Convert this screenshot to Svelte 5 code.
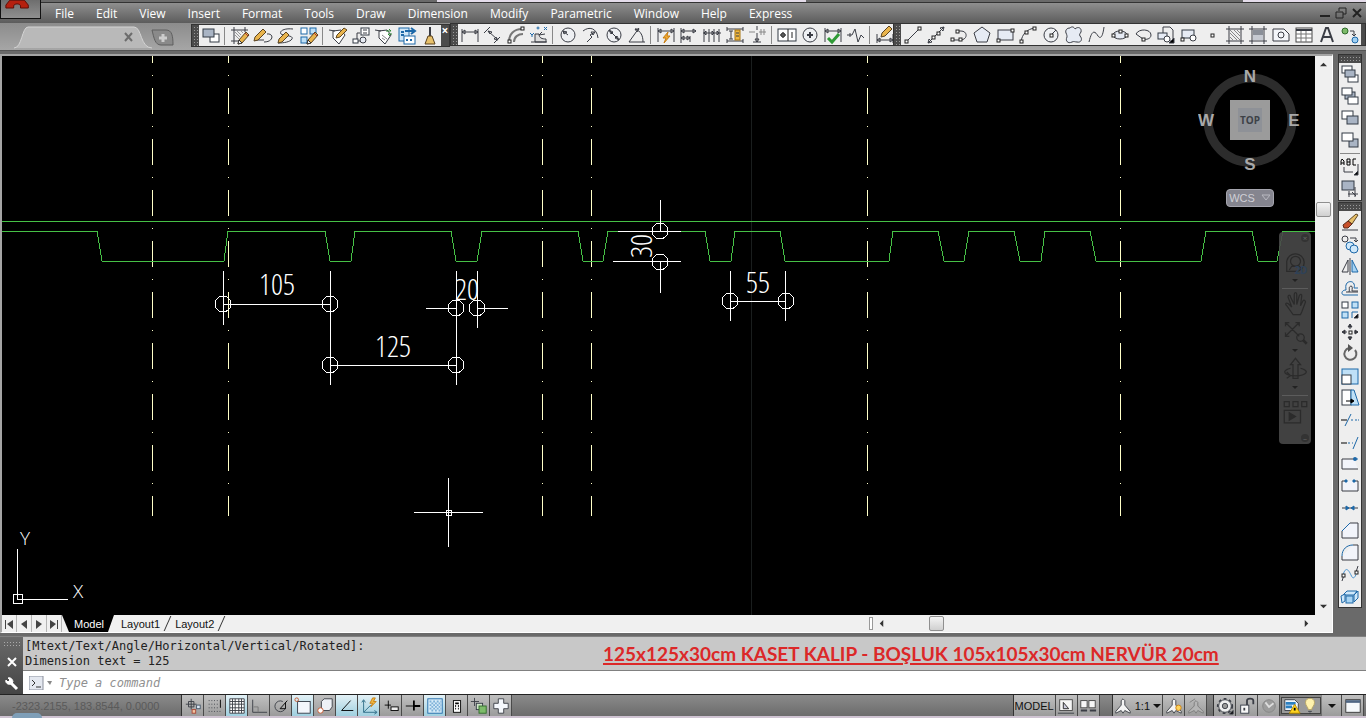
<!-- App.svelte -->
<script lang="ts">
    type Tool = { icon: string; label: string; on?: boolean };

    const menus = ['File', 'Edit', 'View', 'Insert', 'Format', 'Tools', 'Draw', 'Dimension', 'Modify', 'Parametric', 'Window', 'Help', 'Express'];

    // Shared pieces of the icon drawings
    const pencil = '<path d="M8 18l1-4 7-8 3 3-7 8z" fill="#e9b44c" stroke="#5a4320"/><path d="M8 18l1-4 3 3z" fill="#fff" stroke="#333"/><path d="M15 7l3 3" stroke="#a33"/>';
    const dimFrame = '<path d="M2 3v14M18 3v14M2 6h16M2 6l3-2v4zM18 6l-3-2v4z"/>';
    const node = (x: number, y: number) => `<rect x="${x - 1}" y="${y - 1}" width="3" height="3" fill="#fff" stroke="#222"/>`;
    const sq = (x: number, y: number, w: number, h: number, fill: string, stroke = '#333a45') =>
        `<rect x="${x}" y="${y}" width="${w}" height="${h}" fill="${fill}" stroke="${stroke}"/>`;

    // All icons are drawn on a 20 x 20 box
    const icons: Record<string, string> = {
        order: sq(9, 8, 9, 8, '#fff') + sq(2, 3, 11, 8, '#a9b4c4'),
        hatchEdit: '<path d="M1 4h17M4 1v17M1 15h8M15 1v5"/><path d="M5 9l5 5M5 6l5 5M7 5l4 4M11 5l2 2" stroke="#999"/>' + pencil,
        polyEdit: '<path d="M2 14h9M11 16c10 0 10-9 3-8"/><path d="M1 15l1-4 8-8 3 3-8 8z" fill="#e9b44c" stroke="#5a4320"/>',
        splineEdit: '<path d="M17 3C8 2 3 5 5 8c2 2 13 1 11 5-2 3-8 4-14 4"/><path d="M2 17l1-4 7-7 3 3-7 7z" fill="#e9b44c" stroke="#5a4320"/>',
        arrayEdit: sq(2, 2, 6, 6, '#fff', '#1d68a8') + sq(11, 2, 6, 6, '#bfe0f7', '#1d68a8') + sq(2, 11, 6, 6, '#bfe0f7', '#1d68a8') + pencil,
        attEdit: '<path d="M1 4l6 1M5 5l8-1 4 5-6 9-6-6z" fill="#fff"/><path d="M8 12l1-3 7-7 3 2-7 7z" fill="#e9b44c" stroke="#5a4320"/>',
        blockAtt: sq(10, 2, 8, 7, '#fff') + '<path d="M12 4h4M12 7h4M6 7h3M6 7v6M7 15h3"/>' + sq(2, 13, 5, 4, '#fff') + '<circle cx="12" cy="14" r="3" fill="#e8ecf4"/>',
        attSync: '<path d="M1 4l6 1M5 5l8-1 4 5-6 9-6-6z" fill="#fff"/><path d="M8 9l5 4M8 12l3 2" stroke="#888"/><path d="M12 5h5l-2-2M18 8h-4l2 2" stroke="#2f8a36"/>',
        attExtract: sq(2, 2, 10, 13, '#cfe6f7', '#1d68a8') + '<path d="M4 6h3M4 9h3" stroke="#1d68a8" stroke-width="2"/>' + sq(7, 10, 11, 8, '#fff', '#1d68a8') + '<path d="M9 14h2M13 14h2M8 5h9M14 2l4 3-4 3" stroke="#1d68a8" stroke-width="2"/>',
        broom: '<path d="M10 1v9" stroke-width="2"/><path d="M8 10h4l3 8H5z" fill="#e7c06a" stroke="#5a4320"/>',
        dimLinear: '<path d="M2 4v13M18 4v13M2 7h16M2 7l3-2v4zM18 7l-3-2v4z"/>',
        dimAligned: '<path d="M5 6l10 9M1 8l6-6M11 18l6-6M5 6l4 1-2 2zM15 15l-4-1 2-2z"/>',
        dimArc: '<path d="M3 17C3 9 8 4 16 4M8 17c0-5 4-8 9-8" stroke="#777" stroke-width="2"/>' + node(3, 16) + node(16, 3),
        dimOrdinate: '<path d="M6 17V9h4c0 4 3 5 7 5v3z" fill="#ddd"/><path d="M2 17h16M10 10l3-3M10 10l6-1"/><circle cx="9" cy="3" r="1" stroke="#1d68a8"/><path d="M15 2l3 3M18 2l-3 3M1 8l2 2 2-2M3 10v2" stroke="#1d68a8"/>',
        dimRadius: '<circle cx="10" cy="10" r="7" fill="#eef0f3"/><path d="M10 10L5 6M5 6l4 1-3 2z"/>',
        dimJogged: '<path d="M2 6c6-5 14-3 15 7"/><path d="M6 17l5-5-2-2 5-3M14 7l-4 0 2 3z"/>',
        dimDiameter: '<circle cx="10" cy="10" r="7" fill="#eef0f3"/><path d="M5 5l10 10M5 5l4 2-2 2zM15 15l-4-2 2-2z"/>',
        dimAngular: '<path d="M2 17h16M2 17L12 3M8 4c6 2 8 7 8 13M8 4l4 0-2 3z"/>',
        quickDim: dimFrame + '<path d="M12 7l-5 6h3l-2 5 6-7h-3z" fill="#f0a830" stroke="#c77d12"/>',
        dimBase: '<path d="M2 3v15M2 6h15M2 13h9M17 6l-3-2v4zM2 6l3-2v4zM11 11v6M11 13l-3-2v4zM2 13l3-2v4z"/>',
        dimContinue: '<path d="M2 4v13M7 4v13M12 4v13M17 4v13M1 8h18M2 8l2-2v4zM12 8l-2-2v4zM17 8l-2-2v4z"/>',
        dimSpace: '<path d="M2 2v4M18 2v4M2 4h16M2 14v4M18 14v4M2 16h16M6 6v8M4 6h4M4 14h4"/>' + sq(10, 5, 5, 10, '#f0b840', '#a8740d') + '<path d="M11 8h3M11 11h3"/>',
        dimBreak: '<path d="M1 7h6M11 7h7M13 4v6M16 4v6" stroke="#888"/><path d="M9 1v4M9 8v9M5 17h8M9 17l-2-3h4z"/>',
        tolerance: sq(1, 4, 18, 12, '#fff') + '<path d="M11 4v12M3 10h6M6 7v6M15 7v6" stroke="#222"/><circle cx="6" cy="10" r="2" stroke="#222"/>',
        centerMark: '<circle cx="10" cy="10" r="7" fill="#eef0f3"/><path d="M7 10h6M10 7v6" stroke-width="2"/>',
        inspect: dimFrame + '<path d="M5 13l4 4 7-8" stroke="#2f9a36" stroke-width="3"/>',
        jogLine: '<path d="M1 10h5l3-6 3 13 3-7 3 3M4 8v4"/>',
        dimEdit: '<path d="M2 9v9M18 9v9M2 15h16M2 15l3-2v4zM18 15l-3-2v4z"/><path d="M6 12l1-4 7-7 3 3-7 7z" fill="#e9b44c" stroke="#5a4320"/>',
        line: '<path d="M3 17L17 3"/>' + node(3, 16) + node(16, 3),
        xline: '<path d="M2 18L18 2M2 18l1-4 3 3zM18 2l-4 1 3 3z"/>' + node(7, 12) + node(12, 8),
        pline: '<path d="M3 15h8c8 0 8-9 1-9H8"/>' + node(3, 14) + node(11, 14) + node(8, 6),
        polygon: '<path d="M10 2l8 6-3 9H5L2 8z" fill="#e6ebf4"/>',
        rect: '<rect x="3" y="5" width="15" height="10" fill="#e6ebf4"/>' + node(3, 15) + node(17, 5),
        arc: '<path d="M3 17C4 9 9 4 17 3"/>' + node(3, 16) + node(8, 7) + node(16, 3),
        circle: '<circle cx="10" cy="10" r="7" fill="#eef0f3"/><path d="M10 10l5-5"/>' + node(10, 10),
        cloud: '<path d="M6 3c2-2 4-1 5 1 3-3 7-1 6 3-1 2-2 2-1 4 3 3 1 7-3 6-2 0-3-1-5 0-4 2-7-1-5-5 0-1 0-2-1-4-1-3 1-5 4-5z" fill="#e6ebf4"/>',
        spline: '<path d="M2 17C5 4 8 6 11 11c3 4 5-1 6-9"/>',
        ellipse: '<ellipse cx="10" cy="10" rx="7" ry="4" fill="#e6ebf4"/>' + node(3, 10) + node(16, 10) + node(10, 6),
        ellipseArc: '<path d="M3 9c3-6 15-5 15 1 0 4-5 5-8 4M3 9l7 5"/>' + node(10, 14),
        insertBlock: '<path d="M7 8V2h7l3 3v11h-3"/>' + sq(2, 8, 9, 6, '#e6ebf4') + '<circle cx="11" cy="14" r="3" fill="#fff"/><path d="M18 13v5h-5z" fill="#000"/>',
        makeBlock: sq(3, 5, 12, 8, '#e6ebf4') + '<circle cx="14" cy="13" r="3" fill="#fff"/>' + node(3, 14),
        point: node(10, 10),
        hatch: '<path d="M1 4h18M4 1v18M1 16h18M16 1v18"/><path d="M5 12l3 3M5 8l7 7M5 5l10 10M9 5l6 6M12 5l3 3" stroke="#888"/>',
        gradient: '<path d="M1 4h18M4 1v18M1 16h18M16 1v18"/><rect x="5" y="5" width="10" height="5" fill="#8a8f98" stroke="none"/><rect x="5" y="10" width="10" height="5" fill="#c6cad2" stroke="none"/>',
        region: '<path d="M2 4h11l5 5v7H2z" fill="#f4f6fa"/><circle cx="10" cy="10" r="3"/>',
        table: sq(2, 3, 16, 14, '#fff', '#444') + '<path d="M2 5h16" stroke-width="2"/><path d="M2 9h16M2 13h16M7 6v11M12 6v11" stroke="#777"/>',
        mtext: '<path d="M4 17L9 3h2l5 14M6 12h8" stroke-width="2"/>',
        addSel: '<circle cx="5" cy="6" r="3" fill="#7dbb6a" stroke="#2f6a2a"/><circle cx="15" cy="15" r="3" fill="#9fd0f3" stroke="#1d68a8"/><path d="M10 6h4v5M12 9l2 2 2-2"/>',
        front: sq(2, 2, 10, 7, '#fff') + sq(8, 11, 10, 7, '#fff') + sq(5, 6, 10, 7, '#a9b4c4'),
        back: sq(5, 6, 10, 7, '#a9b4c4') + sq(2, 2, 10, 7, '#fff') + sq(8, 11, 10, 7, '#fff'),
        above: sq(2, 3, 11, 8, '#fff') + sq(7, 8, 11, 8, '#a9b4c4'),
        under: sq(9, 9, 9, 8, '#a9b4c4') + sq(2, 3, 11, 8, '#fff'),
        textFront: '<path d="M1 8V4l1-2 2 2v4M1 6h3M7 2v6h3V2zM7 5h3M16 2h-3v6h3" stroke="#000"/><path d="M18 7v7M4 10v5h9"/><path d="M18 14v4h-4z" fill="#000"/>',
        hatchBack: sq(2, 2, 12, 9, '#a9b4c4') + '<path d="M8 15h10M15 8v10M9 12v6M12 13l4 4"/>',
        erase: '<path d="M2 18h16"/><path d="M8 9l8-7 2 1-6 9z" fill="#e7c06a" stroke="#5a4320"/><path d="M3 13l5-4 4 3-4 4-4 0z" fill="#c8502a" stroke="#5a2a18"/>',
        copy: '<circle cx="5" cy="5" r="3"/><path d="M10 4h6v4M14 6l2 2 2-2"/><circle cx="10" cy="12" r="4" fill="#cfe8fa" stroke="#1d68a8"/><circle cx="14" cy="15" r="4" fill="#cfe8fa" stroke="#1d68a8"/>',
        mirror: '<path d="M8 4v12H2z"/><path d="M12 4v12h6z" fill="#a8d4f3" stroke="#1d68a8"/><path d="M10 2v17"/>',
        offset: '<path d="M18 17H4c-3 0-3-5 2-5 0-3-1-4 1-7 2-2 6-2 7 1 1 2 0 3 0 4h4" stroke="#1d68a8"/><path d="M18 14H6M9 14c1-3-1-5 2-6 2 0 1 3 1 5h6"/>',
        array: sq(2, 2, 6, 6, '#fff') + sq(12, 2, 6, 6, '#bfe0f7', '#1d68a8') + sq(2, 12, 6, 6, '#bfe0f7', '#1d68a8') + '<path d="M12 18v-6h6" stroke="#1d68a8"/><path d="M18 14v4h-4z" fill="#000"/>',
        move: '<path d="M10 2v5M10 14v4M2 10h5M14 10h4M10 2l-2 3h4zM10 18l-2-3h4zM2 10l3-2v4zM18 10l-3-2v4z" fill="#333"/>' + node(10, 10),
        rotate: '<path d="M9 4a6 6 0 1 0 6 2" stroke="#666" stroke-width="2"/><path d="M8 0l5 4-5 4z" fill="#555" stroke="none"/>',
        scale: sq(2, 3, 16, 15, '#bfe0f7', '#1d68a8') + sq(2, 9, 9, 9, '#fff'),
        stretch: sq(2, 2, 9, 15, '#fff') + '<path d="M11 2h3l5 15h-8z" fill="#bfe0f7" stroke="#1d68a8"/><path d="M6 13h7M11 11l3 2-3 2z" fill="#000" stroke="#000"/>',
        trim: '<path d="M1 10h6" stroke="#000"/><path d="M5 16l6-12M11 10h2M15 10h2M18 10h1" stroke="#1d68a8"/>',
        extend: '<path d="M1 11h6" stroke="#000"/><path d="M8 11h2M12 11h1M13 17l5-12" stroke="#1d68a8"/>',
        breakAt: '<path d="M14 5H2v10h16" fill="#f2f4fa"/><path d="M14 5h4" stroke="#1d68a8"/><circle cx="15" cy="5" r="1" stroke="#1d68a8" stroke-width="2"/>',
        breakLine: '<path d="M5 5H2v10h16V5h-3" fill="#f2f4fa"/><path d="M5 4h2v2H5zM13 4h2v2h-2z" fill="#1d68a8" stroke="#1d68a8"/>',
        join: '<path d="M2 10h16"/><path d="M9 10L6 8v4zM11 10l3-2v4z" fill="#1d68a8" stroke="#1d68a8"/>',
        chamfer: '<path d="M10 3h8v15H2V11" fill="#f2f4fa"/><path d="M2 11l8-8" stroke="#1d68a8"/>',
        fillet: '<path d="M13 3h5v15H2v-4" fill="#f2f4fa"/><path d="M2 14C2 7 7 3 13 3" stroke="#1d68a8"/>',
        blend: '<path d="M2 17l2-6M16 8l2-6"/><path d="M3 11c3-10 6-4 8 0 2 5 4 3 6-3" stroke="#4a94d0"/>' + node(3, 11) + node(16, 8),
        explode: '<path d="M3 9l4-4h10l-3 4zM14 9l4-4v7l-4 4z" fill="#cfe8fa" stroke="#1d68a8"/>' + sq(6, 10, 7, 7, '#a8d4f3', '#1d68a8') + '<path d="M1 10l4-2v7l-3 2z" fill="#cfe8fa" stroke="#1d68a8"/>',
        infer: '<path d="M8 2v12M2 8h12M5 5h6v6H5z"/>' + sq(14, 9, 4, 4, '#dbe7f5', '#456') + sq(9, 14, 4, 4, '#f2c4a0', '#a43'),
        snap: '<path d="M3 4h10M3 8h10M3 12h10M3 16h14" stroke-dasharray="1 2"/><path d="M16 3v9" stroke="#000"/>',
        grid: '<path d="M2 2h16v16H2zM2 5h16M2 8h16M2 12h16M2 15h16M5 2v16M8 2v16M12 2v16M15 2v16" fill="#fff"/>',
        ortho: '<path d="M3 3v14h16"/><path d="M4 11h5v6" stroke="#777"/>',
        polar: '<path d="M15 12a6 6 0 1 1-3-7"/><path d="M9 13l8-9M15 6v7H9" stroke="#000"/>',
        osnap: sq(4, 5, 14, 13, '#f3f6fb') + '<circle cx="3" cy="3" r="2" stroke="#c5542a"/>',
        osnap3d: '<path d="M6 5l3-3h9v9l-3 4H6z" fill="#eef1f6"/><circle cx="5" cy="15" r="3" fill="#fff" stroke="#c5542a"/>',
        otrack: '<path d="M14 4L4 15h13" stroke="#000"/>',
        ducs: '<path d="M4 4v13h14M4 17l8-8M2 6l2-3 2 3M16 15l3 2-3 2" stroke="#2b6b86"/><path d="M14 1l-3 6h3l-2 4 6-6h-3l2-4z" fill="#f0b840" stroke="#c77d12"/>',
        dyn: '<path d="M7 4v9M3 9h7" stroke="#000"/>' + sq(10, 11, 8, 4, '#eee', '#000'),
        lwt: '<path d="M2 10h9" stroke="#000"/><path d="M11 4v11M11 10h7" stroke="#000" stroke-width="2"/>',
        transp: sq(2, 2, 16, 16, '#d6ebf8', '#1d68a8') + '<path d="M4 5h13M4 9h13M4 13h13" stroke="#7eb1d8" stroke-width="2" stroke-dasharray="2 2"/><path d="M6 7h11M6 11h11M6 15h11" stroke="#7eb1d8" stroke-width="2" stroke-dasharray="2 2"/>',
        qp: sq(6, 4, 8, 13, '#fff', '#000') + '<path d="M8 7h4M8 10h1M11 10h1M8 13h1M11 13h1" stroke="#000" stroke-width="2"/>',
        cycle: '<path d="M5 1v9M1 5h9"/>' + sq(7, 7, 7, 7, '#cfe5c8') + sq(10, 10, 8, 8, '#7dbb6a', '#2f6a2a'),
        monitor: '<path d="M7 2h6v5h5v6h-5v5H7v-5H2V7h5z" fill="#f5f8fc"/>',
        layout: sq(3, 3, 14, 12, '#f6f6f6', '#444') + '<path d="M1 18h18"/><path d="M7 6v7h6z" fill="#ccd" stroke="#222"/>',
        quickView: sq(2, 4, 7, 8, '#f6f6f6', '#444') + sq(11, 4, 7, 8, '#f6f6f6', '#444') + '<path d="M2 15h7M12 15h7" stroke-width="2"/>',
        anno: '<path d="M10 2l2 2v5l6 7v2l-6-3-2 3-2-3-6 3v-2l6-7V4z" fill="#f4f4f4"/>',
        annoVis: '<path d="M10 2l2 2v5l6 7v2l-6-3-2 3-2-3-6 3v-2l6-7V4z" fill="#f4f4f4"/><circle cx="15" cy="12" r="3" fill="#ffd45c" stroke="#c77d12"/>',
        annoAuto: '<path d="M10 4l2 2v4l6 6v2l-6-3-2 3-2-3-6 3v-2l6-6V6zM3 6l6-4" fill="#b5b5b5" stroke="#7c7c7c"/>',
        gear: '<circle cx="10" cy="10" r="8" stroke-width="2" stroke-dasharray="3 3"/><circle cx="10" cy="10" r="7" fill="#eee"/><circle cx="10" cy="10" r="3" fill="#999"/><path d="M19 15v4h-4z" fill="#000"/>',
        lock: sq(3, 9, 9, 9, '#f6f6f6') + '<path d="M10 9V4c0-3 7-3 7 0v4" stroke-width="2"/><path d="M7 12v3" stroke-width="2"/>',
        isolate: '<circle cx="10" cy="10" r="7" fill="#9c9c9c" stroke="#858585"/><path d="M6 6l4 5 5-4" stroke="#ddd" stroke-width="2"/>',
        trayLayers: '<path d="M2 3h11l4 4v8H2z" fill="#eef5fb"/><path d="M3 7h11M3 11h7" stroke="#2b7fc0" stroke-width="3"/><path d="M13 8l6 10H7z" fill="#ffd420" stroke="#b88a00"/><path d="M13 12v3" stroke="#000" stroke-width="2"/>',
        bulb: '<path d="M8 14c0-3-3-4-3-8 0-6 10-6 10 0 0 4-3 5-3 8z" fill="#fff2ad" stroke="#b5a260"/><path d="M8 16h4M9 18h2"/>',
        clean: sq(2, 3, 16, 14, '#f5f8fb', '#333') + '<path d="M2 5h16" stroke-width="3" stroke="#4f6684"/>',
        wheel: '<path d="M3 17V9a7 7 0 1 1 8 8z"/><circle cx="10" cy="9" r="4"/><path d="M5 16l2-3h6l2 2"/>',
        hand: '<path d="M8 18L3 11c-2-2 0-3 2-1l2 2-3-8c0-2 2-2 2 0l3 6V2c0-2 2-2 2 0v8l2-7c1-2 2-1 2 0l-1 8 2-4c1-1 2 0 2 1l-3 8-1 2z"/>',
        zoomExt: '<path d="M2 2l11 11M13 2L2 13M2 5V2h3M10 2h3v3M2 10v3h3"/><circle cx="14" cy="14" r="3"/><path d="M16 16l3 3" stroke-width="2"/>',
        orbit: '<path d="M8 17V6H6l4-5 4 5h-2v11z"/><path d="M6 9C-2 11 1 15 10 15s12-4 4-6M3 12l3 3-3 2"/>',
        motion: '<path d="M1 2h4v4H1zM8 2h4v4H8zM15 2h4v4h-4zM1 9h13v10H1z"/><path d="M5 11l5 3-5 3z" fill="#2b2b2b"/>'
    };

    // "|" stands for a separator in a toolbar
    const modifyTwo = ['order', '|', 'hatchEdit', 'polyEdit', 'splineEdit', 'arrayEdit', '|', 'attEdit', 'blockAtt', 'attSync', 'attExtract', 'broom'];
    const dimensionBar = ['dimLinear', 'dimAligned', 'dimArc', 'dimOrdinate', '|', 'dimRadius', 'dimJogged', 'dimDiameter', 'dimAngular', '|', 'quickDim', 'dimBase', 'dimContinue', 'dimSpace', 'dimBreak', '|', 'tolerance', 'centerMark', 'inspect', 'jogLine', '|', 'dimEdit'];
    const drawBar = ['line', 'xline', 'pline', 'polygon', 'rect', 'arc', 'circle', 'cloud', 'spline', 'ellipse', 'ellipseArc', 'insertBlock', 'makeBlock', 'point', 'hatch', 'gradient', 'region', 'table', 'mtext', 'addSel'];
    const orderBar = ['front', 'back', 'above', 'under', '|', 'textFront', 'hatchBack'];
    const modifyBar = ['erase', 'copy', 'mirror', 'offset', 'array', 'move', 'rotate', 'scale', 'stretch', 'trim', 'extend', 'breakAt', 'breakLine', 'join', 'chamfer', 'fillet', 'blend', 'explode'];

    let toggles = $state<Tool[]>([
        { icon: 'infer', label: 'Infer constraints' },
        { icon: 'snap', label: 'Snap mode' },
        { icon: 'grid', label: 'Grid display', on: true },
        { icon: 'ortho', label: 'Ortho mode' },
        { icon: 'polar', label: 'Polar tracking' },
        { icon: 'osnap', label: 'Object snap', on: true },
        { icon: 'osnap3d', label: '3D object snap' },
        { icon: 'otrack', label: 'Object snap tracking', on: true },
        { icon: 'ducs', label: 'Dynamic UCS', on: true },
        { icon: 'dyn', label: 'Dynamic input' },
        { icon: 'lwt', label: 'Lineweight' },
        { icon: 'transp', label: 'Transparency', on: true },
        { icon: 'qp', label: 'Quick properties' },
        { icon: 'cycle', label: 'Selection cycling' },
        { icon: 'monitor', label: 'Annotation monitor' }
    ]);

    const layouts = ['Model', 'Layout1', 'Layout2'];
    let activeLayout = $state('Model');
    let command = $state('');

    // Column axes of the section
    const axes = [152, 228, 542, 591, 867, 1120];

    // Underside of the waffle slab
    const slab = '2,231 97,231 102,261 224,261 228,231 325,231 330,261 351,261 355,231 451,231 456,261 477,261 482,231 578,231 583,261 603,261 608,231 705,231 710,261 731,261 735,231 780,231 785,261 889,261 893,231 938,231 944,261 964,261 969,231 1014,231 1020,261 1041,261 1045,231 1090,231 1096,261 1201,261 1206,231 1252,231 1258,261 1277,261 1283,231 4000,231';

    const dimLines = 'M223 271V325M330 271V385M223 304H330M330 365H456M456 271V385M426 308H456M477 308H508M477 271V328M660 200V231M660 262V293M618 231H681M613 261H681M730 271V321M785 271V321M730 301H785';
    const dimEnds = [[223, 304], [330, 304], [330, 365], [456, 365], [456, 308], [477, 308], [660, 231], [660, 262], [730, 301], [786, 301]];
    const dimTexts = [
        { x: 277, y: 295, text: '105' },
        { x: 467, y: 300, text: '20' },
        { x: 393, y: 357, text: '125' },
        { x: 758, y: 293, text: '55' }
    ];
</script>

{#snippet glyph(name: string)}
    <svg class="glyph" viewBox="0 0 20 20" aria-hidden="true">{@html icons[name]}</svg>
{/snippet}

{#snippet tools(list: string[])}
    {#each list as name}
        {#if name === '|'}
            <span class="sep"></span>
        {:else}
            <button class="tool" aria-label={name}>{@render glyph(name)}</button>
        {/if}
    {/each}
{/snippet}

<div class="app">
    <div class="title-strip"></div>
    <nav class="menu-bar">
        <button class="app-button" aria-label="Application menu">
            <svg viewBox="0 0 40 18"><path d="M5 5l4-5h15l4 5v3h-8V6c0-3-7-3-7 0v2H5z" fill="#b5200f" stroke="#5e0d06" /></svg>
        </button>
        {#each menus as menu}
            <button class="menu">{menu}</button>
        {/each}
        <div class="window-buttons">
            <button aria-label="Minimize"><svg viewBox="0 0 12 12"><path d="M1 9h10" stroke-width="2" /></svg></button>
            <button aria-label="Restore"><svg viewBox="0 0 12 12"><path d="M4 4V1h7v6H8M1 5h7v6H1z" /></svg></button>
            <button aria-label="Close"><svg viewBox="0 0 12 12"><path d="M2 2l8 8M10 2l-8 8" stroke-width="2" /></svg></button>
        </div>
    </nav>

    <div class="bar-row">
        <div class="file-tabs">
            <svg viewBox="0 0 176 27">
                <path d="M14 25c8 0 8-21 14-21h106c8 0 6 21 18 21z" fill="#b9b9b9" />
                <path d="M14 25c8 0 8-21 14-21h106c8 0 6 21 18 21" stroke="#d4d4d4" />
                <path d="M125 10l7 8M132 10l-7 8" stroke="#6d6d6d" stroke-width="2" />
                <path d="M152 7h14c6 0 7 6 7 15h-12c-6 0-7-7-9-15z" fill="#8a8a8a" stroke="#5f5f5f" />
                <path d="M159 15h8M163 11v8" stroke="#ccc" stroke-width="3" />
            </svg>
        </div>
        <div class="toolbar low">
            <span class="grip"></span>
            {@render tools(modifyTwo)}
            <button class="bar-close" aria-label="Close toolbar">×</button>
        </div>
        <div class="toolbar">
            <span class="grip"></span>
            {@render tools(dimensionBar)}
        </div>
        <div class="toolbar last">
            <span class="grip"></span>
            {@render tools(drawBar)}
            <span class="bar-end"></span>
        </div>
    </div>

    <main class="workspace">
        <section class="document">
            <div class="view">
                <div class="canvas">
                    <svg class="drawing">
                        <g transform="translate(-2 -56)">
                            <path class="guide" d="M751 56V4000" />
                            {#each axes as x}
                                <path class="axis" d="M{x} 37V516" />
                            {/each}
                            <path class="slab" d="M2 221H4000" />
                            <polyline class="slab" points={slab} />
                            <path class="dim" d={dimLines} />
                            {#each dimEnds as [cx, cy]}
                                <circle class="dim" {cx} {cy} r="8" />
                            {/each}
                            {#each dimTexts as t}
                                <text class="dim-text" x={t.x} y={t.y}>{t.text}</text>
                            {/each}
                            <text class="dim-text" transform="translate(652 246) rotate(-90)">30</text>
                            <path class="dim" d="M414 512H483M448 478V547M446 510h5v5h-5z" />
                            <path class="dim" d="M17 549V599H68M13 594h9v9h-9z" />
                            <text class="ucs" x="25" y="545">Y</text>
                            <text class="ucs" x="78" y="598">X</text>
                        </g>
                    </svg>

                    <div class="view-cube">
                        <svg viewBox="0 0 104 110">
                            <circle cx="52" cy="55" r="42" stroke="#2c2c2c" stroke-width="9" />
                            <rect x="32" y="35" width="40" height="40" fill="#9b9b9b" />
                            <rect x="40" y="43" width="24" height="24" fill="#8e9197" />
                            <text class="compass" x="52" y="17">N</text>
                            <text class="compass" x="52" y="105">S</text>
                            <text class="compass" x="8" y="61">W</text>
                            <text class="compass" x="96" y="61">E</text>
                            <text class="face" x="52" y="59">TOP</text>
                        </svg>
                        <button class="wcs">WCS <svg viewBox="0 0 10 8"><path d="M1 1h8L5 6z" stroke="#b8b8c0" /></svg></button>
                    </div>

                    <div class="nav-bar">
                        <span class="nav-dot">×</span>
                        <button aria-label="Steering wheel">{@render glyph('wheel')}<b>2D</b></button>
                        <i></i>
                        <hr />
                        <button aria-label="Pan">{@render glyph('hand')}</button>
                        <button aria-label="Zoom extents">{@render glyph('zoomExt')}</button>
                        <i></i>
                        <button aria-label="Orbit">{@render glyph('orbit')}</button>
                        <i></i>
                        <hr />
                        <button aria-label="Show motion">{@render glyph('motion')}</button>
                        <span class="nav-dot foot">–</span>
                    </div>
                </div>
                <div class="scroll vertical">
                    <button aria-label="Scroll up"><svg viewBox="0 0 8 8"><path d="M0 6l4-4 4 4z" /></svg></button>
                    <span class="before"></span>
                    <span class="thumb"></span>
                    <span class="after"></span>
                    <button aria-label="Scroll down"><svg viewBox="0 0 8 8"><path d="M0 2l4 4 4-4z" /></svg></button>
                </div>
            </div>
            <div class="layout-row">
                <div class="layouts">
                    <button class="step" aria-label="First layout"><svg viewBox="0 0 14 14"><path d="M3 3v9h1V3zM11 3v9L5 7z" /></svg></button>
                    <button class="step" aria-label="Previous layout"><svg viewBox="0 0 14 14"><path d="M10 3v9L4 7z" /></svg></button>
                    <button class="step" aria-label="Next layout"><svg viewBox="0 0 14 14"><path d="M4 3v9l6-5z" /></svg></button>
                    <button class="step" aria-label="Last layout"><svg viewBox="0 0 14 14"><path d="M10 3v9h1V3zM3 3v9l6-5z" /></svg></button>
                    {#each layouts as name}
                        <button class="layout" class:active={activeLayout === name} onclick={() => activeLayout = name}>{name}</button>
                    {/each}
                </div>
                <div class="scroll horizontal">
                    <span class="split"></span>
                    <button aria-label="Scroll left"><svg viewBox="0 0 8 8"><path d="M6 0v8L2 4z" /></svg></button>
                    <span class="before"></span>
                    <span class="thumb"></span>
                    <span class="after"></span>
                    <button aria-label="Scroll right"><svg viewBox="0 0 8 8"><path d="M2 0v8l4-4z" /></svg></button>
                </div>
            </div>
        </section>
        <aside class="dock">
            <div class="toolbar upright">
                <span class="grip"></span>
                {@render tools(orderBar)}
            </div>
            <div class="toolbar upright">
                <span class="grip"></span>
                {@render tools(modifyBar)}
            </div>
        </aside>
    </main>

    <section class="command">
        <div class="command-handle">
            <span class="dots"></span>
            <button aria-label="Close command line"><svg viewBox="0 0 12 12"><path d="M2 2l8 8M10 2l-8 8" stroke="#fff" stroke-width="2" /></svg></button>
            <button aria-label="Customize"><svg viewBox="0 0 14 14"><path d="M6 6l6 6" stroke="#fff" stroke-width="3" /><path d="M3 1l2 2-2 2-2-2c-1 3 2 5 5 4l2-2c0-2-2-5-5-4z" fill="#fff" stroke="#fff" /></svg></button>
        </div>
        <div class="command-body">
            <div class="history">
                <div class="lines">[Mtext/Text/Angle/Horizontal/Vertical/Rotated]:<br />Dimension text = 125</div>
                <div class="note">125x125x30cm KASET KALIP - BOŞLUK 105x105x30cm NERVÜR 20cm</div>
            </div>
            <div class="prompt">
                <button class="recent" aria-label="Recent commands">
                    <svg viewBox="0 0 26 14"><path d="M0 0h14v14H0z" fill="#e4e8f0" stroke="#8a8f9c" /><path d="M3 4l3 3-3 3M7 11h5" stroke="#333" /><path d="M18 5h5l-2 4z" fill="#888" /></svg>
                </button>
                <input type="text" aria-label="Command" placeholder="Type a command" bind:value={command} />
            </div>
        </div>
    </section>

    <footer class="status">
        <span class="coords">-2323.2155, 183.8544, 0.0000</span>
        <div class="group">
            {#each toggles as t}
                <button class="toggle" class:on={t.on} aria-label={t.label} onclick={() => t.on = !t.on}>{@render glyph(t.icon)}</button>
            {/each}
        </div>
        <span class="fill"></span>
        <div class="group">
            <button class="toggle wide">MODEL</button>
            <button class="toggle" aria-label="Layout">{@render glyph('layout')}</button>
            <button class="toggle" aria-label="Quick view">{@render glyph('quickView')}</button>
        </div>
        <div class="group">
            <button class="toggle wide">{@render glyph('anno')} 1:1 <i></i></button>
            <button class="toggle" aria-label="Annotation visibility">{@render glyph('annoVis')}</button>
            <button class="toggle" aria-label="Add scales">{@render glyph('annoAuto')}</button>
        </div>
        <div class="group last-group">
            <button class="toggle" aria-label="Workspace">{@render glyph('gear')}</button>
            <button class="toggle" aria-label="Lock">{@render glyph('lock')}</button>
            <button class="toggle" aria-label="Isolate objects">{@render glyph('isolate')}</button>
            <span class="tray">{@render glyph('trayLayers')}{@render glyph('bulb')}</span>
            <button class="toggle menu-arrow" aria-label="Status bar menu"><i></i></button>
            <button class="toggle" aria-label="Clean screen">{@render glyph('clean')}</button>
        </div>
        <span class="orb"></span>
    </footer>
</div>

<style>
:global(body) {
    margin: 0;
    background: #6a6a6a;
}

.app {
    display: flex;
    flex-direction: column;
    height: 100vh;
    overflow: hidden;
    background: #6a6a6a;
    font-family: "Open Sans", "Noto Sans", sans-serif;
    font-size: 12px;
}

button {
    display: flex;
    align-items: center;
    justify-content: center;
    padding: 0;
    border: none;
    background: none;
    color: inherit;
    font: inherit;
}

svg {
    display: block;
    fill: none;
}

.glyph {
    width: 20px;
    height: 20px;
    flex: none;
    stroke: #3a3d45;
    stroke-width: 1;
}

.title-strip {
    flex: none;
    height: 2px;
    background: linear-gradient(90deg, #6a6a6a 32%, #e4dcea 32%, #e4dcea 59%, #6a6a6a 59%, #6a6a6a 91%, #e4dcea 91%);
}

.menu-bar {
    position: relative;
    flex: none;
    display: flex;
    align-items: center;
    gap: 22px;
    height: 20px;
    padding-left: 55px;
    border-top: 1px solid #333;
    background: linear-gradient(#8f8f8f, #5c5c5c);
    color: #fff;
}

.app-button {
    position: absolute;
    left: 0;
    top: -3px;
    width: 41px;
    height: 19px;
    border: 1px solid #111;
    border-top: none;
    background: linear-gradient(#6e6e6e, #909090);
}

.app-button svg {
    width: 40px;
    height: 18px;
}

.window-buttons {
    display: flex;
    gap: 4px;
    margin-left: auto;
    padding-right: 3px;
}

.window-buttons svg {
    width: 12px;
    height: 12px;
    stroke: #222;
}

.bar-row {
    flex: none;
    display: flex;
    align-items: flex-start;
    height: 27px;
    border-bottom: 1px solid #555;
    background: linear-gradient(#8c8c8c, #a6a6a6);
}

.file-tabs {
    flex: none;
    width: 191px;
}

.file-tabs svg {
    width: 176px;
    height: 27px;
}

.toolbar {
    flex: none;
    display: flex;
    align-items: center;
    box-sizing: border-box;
    height: 23px;
    border: 1px solid #333;
    background: #eeeeee;
}

.toolbar.low {
    margin-top: 1px;
}

.toolbar.last {
    position: relative;
    flex: 1;
    min-width: 0;
    margin-left: -4px;
    overflow: hidden;
}

.grip {
    flex: none;
    align-self: stretch;
    width: 7px;
    background: radial-gradient(#999 1px, transparent 1px) 1px 4px / 3px 3px, #4b4b4b;
}

.tool {
    flex: none;
    width: 23px;
    height: 22px;
}

.sep {
    flex: none;
    box-sizing: border-box;
    width: 6px;
    height: 18px;
    border: solid #eeeeee;
    border-width: 0 3px 0 2px;
    background: #888;
}

.bar-close,
.bar-end {
    align-self: stretch;
    width: 8px;
    margin-left: auto;
    background: #4b4b4b;
}

.bar-close {
    align-items: flex-start;
    color: #fff;
    font-weight: bold;
    line-height: 12px;
}

.bar-end {
    width: 4px;
}

.workspace {
    flex: 1;
    display: flex;
    min-height: 0;
    padding-top: 3px;
}

.document {
    flex: 1;
    display: flex;
    flex-direction: column;
    min-width: 0;
    margin-bottom: 3px;
    border: 2px solid #a5a5a5;
    border-right: 1px solid #fff;
    border-bottom: 1px solid #fff;
}

.view {
    flex: 1;
    display: flex;
    min-height: 0;
}

.canvas {
    position: relative;
    flex: 1;
    min-width: 0;
    background: #000;
    overflow: hidden;
}

.drawing {
    width: 100%;
    height: 100%;
    shape-rendering: crispEdges;
}

.guide {
    stroke: #1a1e1e;
}

.axis {
    stroke: #ffffc8;
    stroke-dasharray: 26 12 1 12;
}

.slab {
    stroke: #46c046;
}

.dim {
    stroke: #fff;
}

.dim-text {
    fill: #fff;
    font-family: "Open Sans Condensed Light", "Roboto Condensed", "Liberation Sans Narrow", "Roboto", sans-serif;
    font-size: 30px;
    font-weight: 300;
    text-anchor: middle;
}

.ucs {
    fill: #fff;
    font-family: "Open Sans", sans-serif;
    font-size: 19px;
    font-weight: 300;
    text-anchor: middle;
}

.view-cube {
    position: absolute;
    top: 9px;
    right: 13px;
    display: flex;
    flex-direction: column;
    align-items: center;
    gap: 14px;
}

.view-cube > svg {
    width: 104px;
    height: 110px;
}

.compass {
    fill: #a9a9a9;
    font: bold 17px "Liberation Sans", sans-serif;
    text-anchor: middle;
}

.face {
    fill: #3d4147;
    font: bold 10px "Open Sans", sans-serif;
    text-anchor: middle;
}

.wcs {
    gap: 6px;
    width: 48px;
    height: 18px;
    border: 1px solid #a5a5ae;
    border-radius: 4px;
    background: #85858f;
    color: #d0d0d6;
    font: 11px "Liberation Sans", sans-serif;
}

.wcs svg {
    width: 10px;
    height: 8px;
}

.nav-bar {
    position: absolute;
    top: 176px;
    right: 4px;
    display: flex;
    flex-direction: column;
    align-items: center;
    box-sizing: border-box;
    width: 32px;
    height: 212px;
    border-radius: 4px;
    background: rgba(72, 72, 72, 0.9);
}

.nav-bar button {
    position: relative;
    height: 28px;
    flex: none;
}

.nav-bar .glyph {
    width: 25px;
    height: 25px;
    stroke: #2b2b2b;
}

.nav-bar b {
    position: absolute;
    right: 0;
    bottom: 0;
    color: #2f4258;
    font-size: 10px;
    line-height: 12px;
}

.nav-bar hr {
    width: 26px;
    margin: 3px 0 1px;
    border: none;
    border-top: 1px solid #5c5c5c;
}

.nav-bar i {
    margin: 3px 0;
    border: 3px solid transparent;
    border-top-color: #222;
    border-bottom-width: 0;
}

.nav-dot {
    align-self: flex-end;
    width: 8px;
    height: 8px;
    margin: 2px 2px 6px;
    border-radius: 50%;
    background: #333;
    color: #666;
    font-size: 8px;
    line-height: 8px;
    text-align: center;
}

.nav-dot.foot {
    margin: auto 2px 2px;
}

.scroll {
    display: flex;
    background: #f0f0f0;
}

.scroll button {
    flex: none;
    width: 17px;
    height: 17px;
}

.scroll svg {
    width: 7px;
    height: 7px;
    fill: #333;
}

.vertical {
    flex: none;
    flex-direction: column;
    width: 17px;
}

.thumb {
    flex: none;
    box-sizing: border-box;
    width: 15px;
    height: 15px;
    margin: 1px;
    border: 1px solid #8f8f8f;
    border-radius: 2px;
    background: linear-gradient(#f4f4f4, #d0d0d0);
}

.vertical .before {
    flex: 128;
}

.vertical .after {
    flex: 380;
}

.layout-row {
    flex: none;
    display: flex;
    height: 17px;
    background: #f0f0f0;
}

.layouts {
    flex: 66;
    display: flex;
    font: 11px "Liberation Sans", sans-serif;
}

.step {
    box-sizing: border-box;
    width: 15px;
    border-right: 1px solid #b5b5b5;
}

.step svg {
    width: 14px;
    height: 14px;
    fill: #444;
}

.layout {
    position: relative;
    padding: 0 8px 0 7px;
    color: #111;
}

.layout::after {
    content: "";
    position: absolute;
    top: 1px;
    right: 0;
    width: 1px;
    height: 15px;
    background: #333;
    transform: skewX(-24deg);
}

.layout.active {
    padding: 0 10px 0 12px;
    background: #000;
    color: #fff;
    clip-path: polygon(0 0, 100% 0, calc(100% - 6px) 100%, 7px 100%);
}

.horizontal {
    flex: 34;
    padding-right: 17px;
}

.horizontal .before {
    flex: 38;
}

.horizontal .after {
    flex: 350;
}

.split {
    width: 4px;
    box-sizing: border-box;
    margin: 2px 0;
    border: 1px solid #999;
    background: #fff;
}

.dock {
    flex: none;
    display: flex;
    flex-direction: column;
    gap: 1px;
    padding: 0 4px 0 5px;
}

.upright {
    flex-direction: column;
    width: 24px;
    height: auto;
}

.upright .grip {
    width: auto;
    height: 8px;
}

.upright .sep {
    width: 20px;
    height: 5px;
    border-width: 2px 0;
}

.command {
    flex: none;
    display: flex;
    height: 57px;
    border-top: 1px solid #808080;
}

.command-handle {
    flex: none;
    display: flex;
    flex-direction: column;
    align-items: center;
    gap: 9px;
    width: 23px;
    background: linear-gradient(#6a6a6a, #444);
}

.dots {
    width: 18px;
    height: 6px;
    margin-top: 4px;
    background: radial-gradient(#aaa 1px, transparent 1px) 0 0 / 3px 3px;
}

.command-handle svg {
    width: 12px;
    height: 12px;
}

.command-handle button:last-child svg {
    width: 14px;
    height: 14px;
}

.command-body {
    flex: 1;
    display: flex;
    flex-direction: column;
    min-width: 0;
}

.history {
    flex: 1;
    display: flex;
    align-items: center;
    border-bottom: 1px solid #808080;
    background: #c8c8c8;
}

.lines {
    flex: none;
    width: 580px;
    padding-left: 2px;
    box-sizing: border-box;
    color: #222;
    font: 12px/15px "DejaVu Sans Mono", monospace;
}

.note {
    color: #dc2828;
    font: bold 19px "Lato", sans-serif;
    text-decoration: underline;
    text-decoration-thickness: 2px;
    text-underline-offset: 2px;
    white-space: nowrap;
}

.prompt {
    display: flex;
    align-items: center;
    gap: 4px;
    height: 23px;
    padding-left: 6px;
    background: #fff;
}

.recent svg {
    width: 26px;
    height: 14px;
}

.prompt input {
    flex: 1;
    min-width: 0;
    padding: 0;
    border: none;
    outline: none;
    background: none;
    font: 12px "DejaVu Sans Mono", monospace;
}

.prompt input::placeholder {
    color: #909090;
    font-style: italic;
    opacity: 1;
}

.status {
    position: relative;
    flex: none;
    display: flex;
    align-items: stretch;
    box-sizing: border-box;
    height: 24px;
    border-top: 1px solid #222;
    border-bottom: 2px solid #cfc3d2;
    background: linear-gradient(#8a8a8a, #6c6c6c);
    color: #111;
    font: 12px "Liberation Sans", sans-serif;
}

.coords {
    box-sizing: border-box;
    width: 181px;
    padding: 4px 0 0 12px;
    color: #5a5a5a;
    font-size: 11px;
    line-height: 14px;
    white-space: nowrap;
}

.group {
    display: flex;
    margin-right: 12px;
    border-left: 1px solid #333;
}

.group.last-group {
    margin-left: -6px;
    margin-right: 2px;
}

.fill {
    flex: 1;
}

.toggle {
    box-sizing: border-box;
    width: 22px;
    border-right: 1px solid #4a4a4a;
    background: linear-gradient(#c0c0c0, #9b9b9b);
}

.toggle .glyph,
.tray .glyph {
    width: 18px;
    height: 18px;
}

.toggle.wide {
    width: auto;
    gap: 3px;
    padding: 0 1px;
    font-size: 11px;
}

.toggle.on {
    background: linear-gradient(#e3f1f6, #9fcfdf);
}

.toggle i {
    border: 4px solid transparent;
    border-top-color: #111;
    border-bottom-width: 0;
}

.toggle.menu-arrow {
    width: 20px;
}

.tray {
    display: flex;
    align-items: center;
    margin: 2px 1px;
    padding: 0 1px;
    border: 1px solid #444;
    background: #9a9a9a;
}

.orb {
    position: absolute;
    left: 12px;
    bottom: -2px;
    width: 30px;
    height: 5px;
    border-radius: 15px 15px 0 0;
    background: #7f9fb8;
}
</style>
